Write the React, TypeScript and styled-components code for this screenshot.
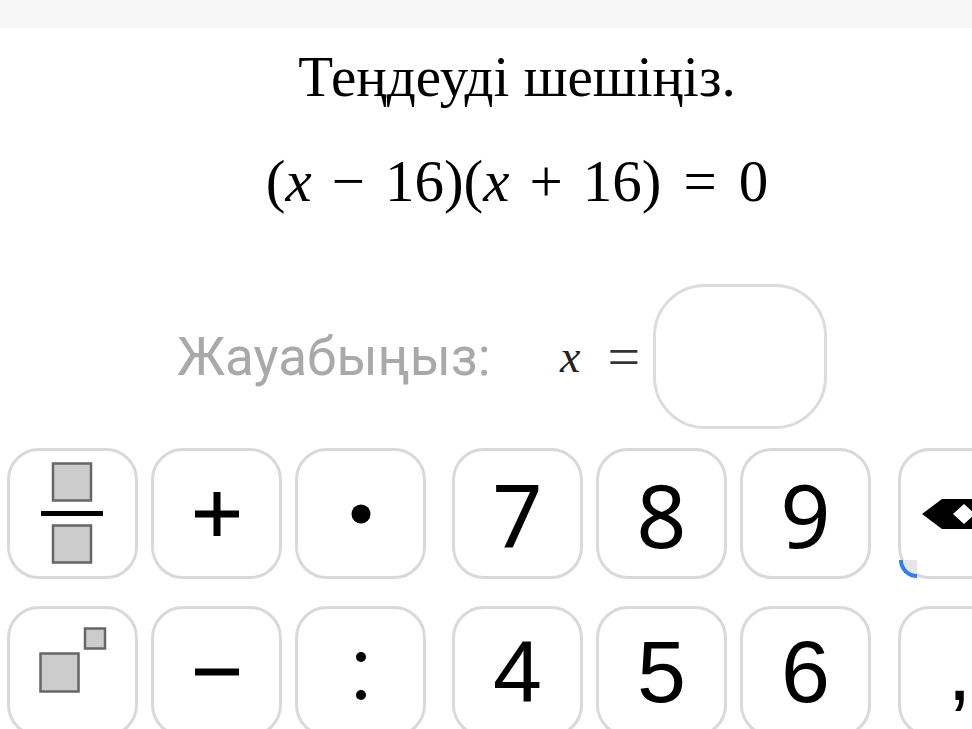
import styled, { createGlobalStyle } from "styled-components";

const GlobalStyle = createGlobalStyle`
	html, body {
		margin: 0;
		padding: 0;
		background: #ffffff;
	}
	* {
		box-sizing: border-box;
	}
`;

const Page = styled.div`
	width: 972px;
	height: 729px;
	overflow: hidden;
	display: flex;
	flex-direction: column;
	background: #ffffff;
`;

const TopBar = styled.div`
	height: 28px;
	flex-shrink: 0;
	background: #f6f6f6;
`;

const Title = styled.h1`
	margin: 20px 0 0 62px;
	text-align: center;
	font-family: "Liberation Serif", "DejaVu Serif", serif;
	font-weight: 400;
	font-size: 57px;
	line-height: 1;
	color: #000000;
`;

const Equation = styled.div`
	margin: 47px 0 0 62px;
	display: flex;
	justify-content: center;
	align-items: baseline;
	font-family: "Liberation Serif", "DejaVu Serif", serif;
	font-size: 59px;
	line-height: 1;
	color: #000000;
`;

const Var = styled.span`
	font-style: italic;
`;

const Op = styled.span<{ $space: number }>`
	margin: 0 ${(p) => p.$space}px;
`;

const AnswerRow = styled.div`
	margin-top: 73px;
	padding-left: 177px;
	display: flex;
	align-items: center;
	height: 145px;
`;

const AnswerLabel = styled.span`
	font-family: Roboto, "Liberation Sans", sans-serif;
	font-size: 53px;
	color: #a9a9a9;
	width: 383px;
`;

const MathX = styled.span`
	font-family: "Liberation Serif", serif;
	font-style: italic;
	font-size: 46px;
	color: #222222;
`;

const MathEq = styled.span`
	font-family: "Liberation Serif", serif;
	font-size: 58px;
	color: #333333;
	margin: 0 13px 0 27px;
`;

const AnswerBox = styled.div`
	width: 174px;
	height: 145px;
	border: 3px solid #dcdcdc;
	border-radius: 52px;
`;

const Keypad = styled.div`
	margin-top: 19px;
	padding-left: 7px;
	display: flex;
	flex-direction: column;
	gap: 27px;
`;

const KeyRow = styled.div`
	display: flex;
	gap: 13px;
`;

const Key = styled.div<{ $font?: string; $extra?: number }>`
	position: relative;
	flex-shrink: 0;
	width: 131px;
	height: 131px;
	margin-left: ${(p) => p.$extra ?? 0}px;
	border: 3px solid #d9d9d9;
	border-radius: 32px;
	display: flex;
	align-items: center;
	justify-content: center;
	font-family: ${(p) => p.$font ?? `"Noto Sans", sans-serif`};
	font-size: 88px;
	line-height: 1;
	color: #000000;
	background: #ffffff;
`;

const SelectHandle = styled.div`
	position: absolute;
	left: -2px;
	bottom: -2px;
	width: 18px;
	height: 18px;
	border-left: 4px solid #2f80ed;
	border-bottom: 4px solid #2f80ed;
	border-bottom-left-radius: 18px;
	background: #e6e6e6;
`;

const Comma = styled.span`
	position: relative;
	left: -4px;
	top: -2px;
`;

const FractionIcon = () => (
	<svg width="64" height="104" viewBox="0 0 64 104">
		<rect x="12" y="1.5" width="38" height="37" fill="#cccccc" stroke="#666666" strokeWidth="2.5" />
		<rect x="0" y="49" width="62" height="5" fill="#000000" />
		<rect x="12" y="63.5" width="38" height="37" fill="#cccccc" stroke="#666666" strokeWidth="2.5" />
	</svg>
);

const PowerIcon = () => (
	<svg width="70" height="90" viewBox="0 0 70 90">
		<rect x="2.5" y="26.5" width="38" height="38" fill="#cccccc" stroke="#666666" strokeWidth="2.5" />
		<rect x="47" y="1.5" width="20" height="20" fill="#cccccc" stroke="#666666" strokeWidth="2.5" />
	</svg>
);

const PlusIcon = () => (
	<svg width="44" height="44" viewBox="0 0 44 44">
		<rect x="0" y="18.5" width="44" height="7" fill="#000000" />
		<rect x="18.5" y="0" width="7" height="44" fill="#000000" />
	</svg>
);

const MinusIcon = () => (
	<svg width="44" height="8" viewBox="0 0 44 8">
		<rect x="0" y="0.5" width="44" height="7" fill="#000000" />
	</svg>
);

const DotIcon = () => (
	<svg width="20" height="20" viewBox="0 0 20 20">
		<circle cx="10" cy="10" r="9.5" fill="#000000" />
	</svg>
);

const ColonIcon = () => (
	<svg width="12" height="58" viewBox="0 0 12 58">
		<circle cx="6" cy="14" r="5" fill="#000000" />
		<circle cx="6" cy="52" r="5" fill="#000000" />
	</svg>
);

const BackspaceIcon = () => (
	<svg width="70" height="36" viewBox="0 0 70 36" style={{ position: "relative", left: -7 }}>
		<path
			fillRule="evenodd"
			d="M0 18 L20 3 L70 3 L70 33 L20 33 Z M31 18 L42 8 L53 18 L42 28 Z"
			fill="#000000"
		/>
	</svg>
);

const App = () => {
	return (
		<Page>
			<GlobalStyle />
			<TopBar />
			<Title>Теңдеуді шешіңіз.</Title>
			<Equation>
				<span>(</span>
				<Var>x</Var>
				<Op $space={20}>−</Op>
				<span>16)(</span>
				<Var>x</Var>
				<Op $space={20}>+</Op>
				<span>16)</span>
				<Op $space={22}>=</Op>
				<span>0</span>
			</Equation>
			<AnswerRow>
				<AnswerLabel>Жауабыңыз:</AnswerLabel>
				<MathX>x</MathX>
				<MathEq>=</MathEq>
				<AnswerBox />
			</AnswerRow>
			<Keypad>
				<KeyRow>
					<Key>
						<FractionIcon />
					</Key>
					<Key>
						<PlusIcon />
					</Key>
					<Key>
						<DotIcon />
					</Key>
					<Key $extra={13}>7</Key>
					<Key>8</Key>
					<Key>9</Key>
					<Key $extra={14}>
						<BackspaceIcon />
						<SelectHandle />
					</Key>
				</KeyRow>
				<KeyRow>
					<Key>
						<PowerIcon />
					</Key>
					<Key>
						<MinusIcon />
					</Key>
					<Key>
						<ColonIcon />
					</Key>
					<Key $extra={13} $font={`"Liberation Sans", Arial, sans-serif`}>
						4
					</Key>
					<Key $font={`"Liberation Sans", Arial, sans-serif`}>5</Key>
					<Key $font={`"Liberation Sans", Arial, sans-serif`}>6</Key>
					<Key $extra={14} $font={`"Liberation Sans", Arial, sans-serif`}>
						<Comma>,</Comma>
					</Key>
				</KeyRow>
			</Keypad>
		</Page>
	);
};

export default App;
